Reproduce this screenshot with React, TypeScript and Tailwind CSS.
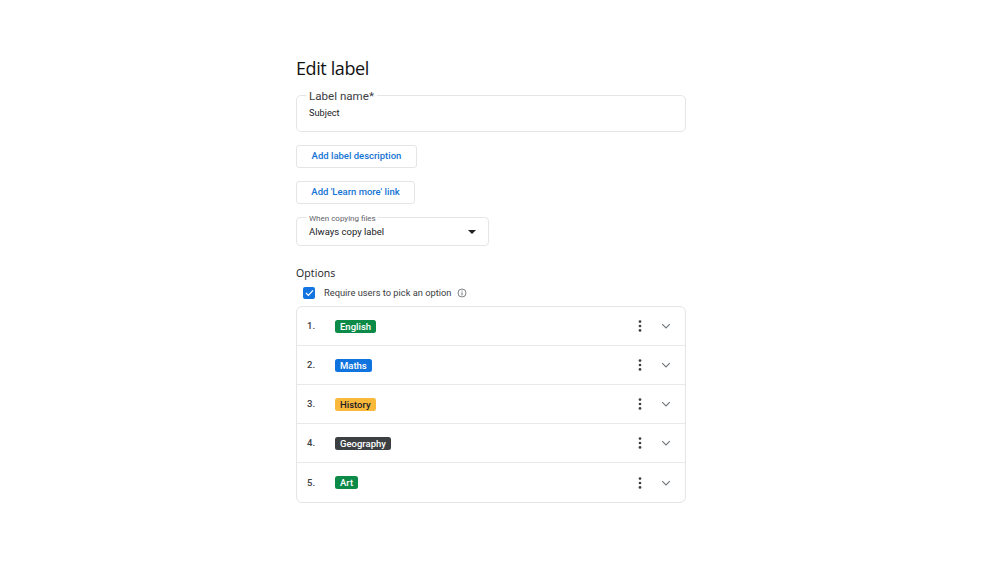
const options = [
  { n: "1.", t: "English", c: "bg-[#0b8a48] text-white" },
  { n: "2.", t: "Maths", c: "bg-[#0f74de] text-white" },
  { n: "3.", t: "History", c: "bg-[#fbb93c] text-[#202124]" },
  { n: "4.", t: "Geography", c: "bg-[#3c4043] text-white" },
  { n: "5.", t: "Art", c: "bg-[#0b8a48] text-white" },
];

function Dots() {
  return (
    <svg width="4" height="12" viewBox="0 0 4 12" className="block">
      <circle cx="2" cy="1.6" r="1.35" fill="#3c4043" />
      <circle cx="2" cy="6" r="1.35" fill="#3c4043" />
      <circle cx="2" cy="10.4" r="1.35" fill="#3c4043" />
    </svg>
  );
}

function Chevron() {
  return (
    <svg width="10" height="6" viewBox="0 0 10 6" fill="none" className="block">
      <path d="M1.2 1.2L5 5l3.8-3.8" stroke="#70757a" strokeWidth="1.1" />
    </svg>
  );
}

export default function App() {
  return (
    <div className="min-h-[563px] w-full bg-white pt-[56px] font-['Roboto',sans-serif] text-[#202124]">
      <div className="ml-[296px] flex w-[390px] flex-col items-start">
        <h1 className="h-[24px] text-[18px] leading-[24px] font-['Open_Sans',sans-serif] tracking-[-0.4px] text-[#111]">Edit label</h1>

        <div className="relative mt-[15px] flex h-[37px] w-full items-center rounded-[5px] border border-[#e4e5e7] px-[12px] pb-[1px] text-[9.2px]">
          <span className="absolute top-[-7px] left-[9px] bg-white px-[3px] text-[11.6px] leading-[14px] text-[#3c4043]">Label name*</span>
          <span>Subject</span>
        </div>

        <button className="mt-[13px] flex h-[23px] w-[121px] items-center justify-center rounded-[3px] border border-[#e4e5e7] text-[9.5px] font-medium text-[#1474d4]">Add label description</button>
        <button className="mt-[13px] flex h-[23px] w-[119px] items-center justify-center rounded-[3px] border border-[#e4e5e7] text-[9.5px] font-medium text-[#1474d4]">Add 'Learn more' link</button>

        <div className="relative mt-[13px] flex h-[29px] w-[193px] items-center justify-between rounded-[4px] border border-[#e4e5e7] pr-[12px] pl-[12px] text-[9.5px]">
          <span className="absolute top-[-4px] left-[10px] bg-white px-[2px] text-[8px] leading-[10px] text-[#5f6368]">When copying files</span>
          <span className="pt-[1px]">Always copy label</span>
          <span className="h-0 w-0 border-x-[4px] border-t-[4px] border-x-transparent border-t-[#202124]" />
        </div>

        <h2 className="mt-[20px] text-[10.5px] leading-[14px] font-['Open_Sans',sans-serif] tracking-[0.1px]">Options</h2>

        <div className="mt-[6px] flex h-[14px] items-center pl-[7px]">
          <span className="flex h-[12px] w-[12px] items-center justify-center rounded-[2px] bg-[#1474e0]">
            <svg width="9" height="8" viewBox="0 0 9 8" fill="none">
              <path d="M1 4l2.4 2.4L8 1.4" stroke="#fff" strokeWidth="1.3" />
            </svg>
          </span>
          <span className="ml-[9px] text-[9.3px] text-[#3c4043]">Require users to pick an option</span>
          <svg width="10" height="10" viewBox="0 0 10 10" fill="none" className="ml-[6px]">
            <circle cx="5" cy="5" r="4" stroke="#5f6368" strokeWidth="0.8" />
            <path d="M5 4.4v3M5 2.6v1" stroke="#5f6368" strokeWidth="0.9" />
          </svg>
        </div>

        <div className="mt-[6px] w-full divide-y divide-[#e8e9eb] rounded-[6px] border border-[#e4e5e7]">
          {options.map((o) => (
            <div key={o.n} className="flex h-[39px] items-center pr-[14px] pl-[10px]">
              <span className="w-[28px] pt-[1px] text-[9.5px] font-medium text-[#3c4043]">{o.n}</span>
              <span className={`rounded-[2.5px] px-[5px] text-[9.5px] leading-[13px] font-medium ${o.c}`}>{o.t}</span>
              <span className="ml-auto"><Dots /></span>
              <span className="ml-[19px]"><Chevron /></span>
            </div>
          ))}
        </div>
      </div>
    </div>
  );
}
